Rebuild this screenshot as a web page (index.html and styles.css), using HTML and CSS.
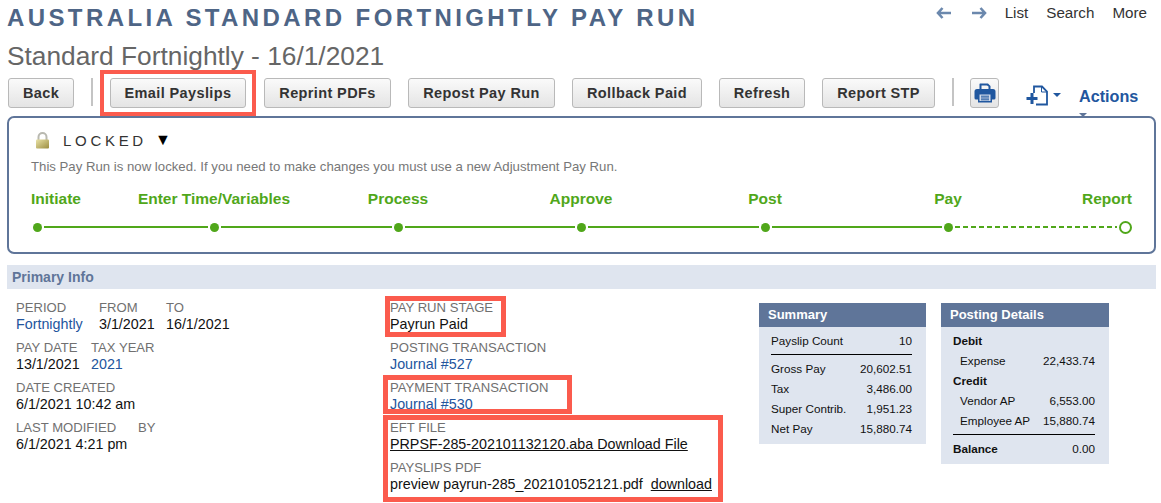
FILE: index.html
```html
<!DOCTYPE html>
<html lang="en">
<head>
<meta charset="utf-8">
<title>Australia Standard Fortnightly Pay Run</title>
<link rel="stylesheet" href="styles.css">
</head>
<body>
<header class="top">
  <h1 class="title">AUSTRALIA STANDARD FORTNIGHTLY PAY RUN</h1>
  <nav class="nav">
    <svg class="arrow arrow-back" width="16" height="12" viewBox="0 0 16 12"><path d="M6.500 1 2 6l4.500 5M2.500 6H15" fill="none" stroke="#6b88ad" stroke-width="2.600"/></svg>
    <svg class="arrow arrow-next" width="16" height="12" viewBox="0 0 16 12"><path d="M9.500 1 14 6l-4.500 5M13.500 6H1" fill="none" stroke="#6b88ad" stroke-width="2.600"/></svg>
    <a class="nav-link nav-list">List</a>
    <a class="nav-link nav-search">Search</a>
    <a class="nav-link">More</a>
  </nav>
</header>
<h2 class="subtitle">Standard Fortnightly - 16/1/2021</h2>

<div class="toolbar">
  <button class="btn btn-back">Back</button>
  <span class="sep sep-a"></span>
  <button class="btn btn-email">Email Payslips<span class="hl hl-email"></span></button>
  <button class="btn btn-reprint">Reprint PDFs</button>
  <button class="btn btn-repost">Repost Pay Run</button>
  <button class="btn btn-rollback">Rollback Paid</button>
  <button class="btn btn-refresh">Refresh</button>
  <button class="btn btn-stp">Report STP</button>
  <span class="sep sep-b"></span>
  <button class="btn btn-print" aria-label="Print">
    <svg width="22" height="22" viewBox="0 0 22 22"><path d="M6 1.500h8l2.500 2.500v3.500h-2V4.500L13 3.500H7.500v4h-2V2z" fill="#20579f"/><path d="M3 7h16a2.500 2.500 0 0 1 2.500 2.500V16a1.500 1.500 0 0 1-1.500 1.500h-2v3H4v-3H2A1.500 1.500 0 0 1 .5 16V9.500A2.500 2.500 0 0 1 3 7z" fill="#20579f"/><path d="M5.500 12.500h11v6.500h-11z" fill="#cfd9e8"/><path d="M7 14.200h8M7 16h8M7 17.800h8" stroke="#20579f" stroke-width="1"/></svg>
  </button>
  <svg class="new-icon" width="24" height="21" viewBox="0 0 24 21"><path d="M8 8V1.500h8l5 5v13H10" fill="none" stroke="#20579f" stroke-width="1.800"/><path d="M15.500 1.500v5.500h5.500" fill="none" stroke="#20579f" stroke-width="1"/><path d="M6 8v11M.5 13.500h11" fill="none" stroke="#20579f" stroke-width="3"/></svg>
  <span class="caret"></span>
  <a class="actions">Actions<span class="actions-tip"></span></a>
</div>

<section class="status">
  <div class="lock-row">
    <svg class="lock" width="15" height="17" viewBox="0 0 15 17"><defs><linearGradient id="gold" x1="0" y1="0" x2="1" y2="1"><stop offset="0" stop-color="#e9e2a6"/><stop offset="1" stop-color="#9b8c3f"/></linearGradient></defs><path d="M3.500 8V5a4 4 0 0 1 8 0v3" fill="none" stroke="#b9b9b0" stroke-width="2"/><rect x="1" y="7.500" width="13" height="9" rx="1" fill="url(#gold)"/></svg>
    <span class="locked">LOCKED</span>
    <span class="locked-caret">▼</span>
  </div>
  <p class="lock-note">This Pay Run is now locked. If you need to make changes you must use a new Adjustment Pay Run.</p>
  <div class="steps steps-labels">
    <span class="step-label step-first">Initiate</span><i></i>
    <span class="step-label">Enter Time/Variables</span><i></i>
    <span class="step-label">Process</span><i></i>
    <span class="step-label">Approve</span><i></i>
    <span class="step-label">Post</span><i></i>
    <span class="step-label">Pay</span><i></i>
    <span class="step-label step-last">Report</span>
  </div>
  <div class="steps steps-track">
    <span class="dot"></span><span class="line"></span>
    <span class="dot"></span><span class="line"></span>
    <span class="dot"></span><span class="line"></span>
    <span class="dot"></span><span class="line"></span>
    <span class="dot"></span><span class="line"></span>
    <span class="dot"></span><span class="line line-dash"></span>
    <span class="dot-open"></span>
  </div>
</section>

<div class="section-bar">Primary Info</div>

<main class="info">
  <div class="col col-one">
    <div class="field-row row-period">
      <div class="field"><div class="lbl">PERIOD</div><a class="val link">Fortnightly</a></div>
      <div class="field"><div class="lbl">FROM</div><div class="val">3/1/2021</div></div>
      <div class="field"><div class="lbl">TO</div><div class="val">16/1/2021</div></div>
    </div>
    <div class="field-row row-pay">
      <div class="field"><div class="lbl">PAY DATE</div><div class="val">13/1/2021</div></div>
      <div class="field"><div class="lbl">TAX YEAR</div><a class="val link">2021</a></div>
    </div>
    <div class="field-row">
      <div class="field"><div class="lbl">DATE CREATED</div><div class="val">6/1/2021 10:42 am</div></div>
    </div>
    <div class="field-row row-mod">
      <div class="field"><div class="lbl">LAST MODIFIED</div><div class="val">6/1/2021 4:21 pm</div></div>
      <div class="field"><div class="lbl">BY</div></div>
    </div>
  </div>

  <div class="col col-two">
    <div class="field-row"><div class="field"><div class="lbl">PAY RUN STAGE</div><div class="val">Payrun Paid</div></div></div>
    <div class="field-row"><div class="field"><div class="lbl">POSTING TRANSACTION</div><a class="val link">Journal #527</a></div></div>
    <div class="field-row"><div class="field"><div class="lbl">PAYMENT TRANSACTION</div><a class="val link">Journal #530</a></div></div>
    <div class="field-row"><div class="field"><div class="lbl">EFT FILE</div><a class="val under">PRPSF-285-202101132120.aba Download File</a></div></div>
    <div class="field-row"><div class="field"><div class="lbl">PAYSLIPS PDF</div><div class="val">preview payrun-285_202101052121.pdf&nbsp; <a class="under">download</a></div></div></div>
    <span class="hl hl-stage"></span>
    <span class="hl hl-payment"></span>
    <span class="hl hl-eft"></span>
  </div>

  <aside class="panel panel-summary">
    <div class="panel-head">Summary</div>
    <div class="panel-body">
      <div class="pr"><span>Payslip Count</span><span>10</span></div>
      <hr class="rule">
      <div class="pr"><span>Gross Pay</span><span>20,602.51</span></div>
      <div class="pr"><span>Tax</span><span>3,486.00</span></div>
      <div class="pr"><span>Super Contrib.</span><span>1,951.23</span></div>
      <div class="pr"><span>Net Pay</span><span>15,880.74</span></div>
    </div>
  </aside>

  <aside class="panel panel-posting">
    <div class="panel-head">Posting Details</div>
    <div class="panel-body">
      <div class="pr pr-bold"><span>Debit</span></div>
      <div class="pr pr-sub"><span>Expense</span><span>22,433.74</span></div>
      <div class="pr pr-bold"><span>Credit</span></div>
      <div class="pr pr-sub"><span>Vendor AP</span><span>6,553.00</span></div>
      <div class="pr pr-sub"><span>Employee AP</span><span>15,880.74</span></div>
      <hr class="rule">
      <div class="pr pr-bold"><span>Balance</span><span class="num-plain">0.00</span></div>
    </div>
  </aside>
</main>
</body>
</html>
```

FILE: styles.css
```css
* { box-sizing: border-box; }
html, body { margin: 0; padding: 0; background: #fff; }
body {
  width: 1161px;
  height: 503px;
  overflow: hidden;
  font-family: "Liberation Sans", Arial, sans-serif;
  font-size: 14px;
  color: #111;
}

/* header */
.top { display: flex; justify-content: space-between; height: 36px; padding: 0 14px 0 7px; }
.title {
  margin: 5px 0 0;
  font-size: 24px;
  line-height: 25px;
  font-weight: bold;
  letter-spacing: 3.400px;
  color: #4e6586;
  white-space: nowrap;
}
.nav { display: flex; align-items: center; height: 24px; margin-top: 1px; color: #333; }
.arrow-back { margin-right: 19px; }
.arrow-next { margin-right: 18px; }
.nav-link { font-size: 15.200px; line-height: 24px; color: #333; }
.nav-list { margin-right: 18px; }
.nav-search { margin-right: 18px; }

.subtitle {
  margin: 5px 0 0 7px;
  font-size: 26.300px;
  line-height: 30px;
  font-weight: normal;
  color: #666;
  white-space: nowrap;
}

/* toolbar */
.toolbar { display: flex; align-items: flex-start; height: 30px; margin-top: 7px; padding-left: 8px; position: relative; }
.btn {
  position: relative;
  height: 30px;
  margin: 0 17px 0 0;
  padding: 0;
  border: 1px solid #b9b9b9;
  border-radius: 3px;
  background: linear-gradient(#fafafa, #e4e4e4);
  font-family: inherit;
  font-size: 14.500px;
  font-weight: bold;
  letter-spacing: .38px;
  color: #333;
}
.btn-back { width: 66px; margin-right: 17px; }
.btn-email { width: 136px; margin-right: 18px; }
.btn-reprint { width: 127px; }
.btn-repost { width: 147px; }
.btn-rollback { width: 130px; }
.btn-refresh { width: 86px; }
.btn-stp { width: 113px; margin-right: 17px; }
.btn-print { width: 29px; margin: 0 27px 0 0; display: flex; align-items: center; justify-content: center; }
.sep { width: 2px; height: 28px; background: #c4c4c4; flex: none; }
.sep-a { margin-right: 17px; }
.sep-b { margin-right: 16px; }
.new-icon { margin-top: 7px; }
.caret {
  width: 0; height: 0; margin: 15px 18px 0 3px;
  border-left: 4px solid transparent;
  border-right: 4px solid transparent;
  border-top: 4px solid #20579f;
}
.actions { position: relative; margin-top: 8px; font-size: 16.200px; line-height: 20px; font-weight: bold; color: #22569e; }
.actions-tip {
  position: absolute; left: 0; top: 27px; width: 0; height: 0;
  border-left: 4px solid transparent;
  border-right: 4px solid transparent;
  border-top: 4px solid #5f7599;
}

/* annotations */
.hl { position: absolute; border: 5px solid #fb5b4d; pointer-events: none; }
.hl-email { left: -11px; top: -9px; width: 156px; height: 46px; border-width: 4.500px; }
.hl-stage { left: -5px; top: -4px; width: 121px; height: 41px; }
.hl-payment { left: -7px; top: 75px; width: 189px; height: 39px; }
.hl-eft { left: -7px; top: 115px; width: 340px; height: 87px; }

/* status box */
.status {
  width: 1149px;
  height: 138px;
  margin: 8px 0 0 7px;
  padding: 12px 22px 0 22px;
  border: 2px solid #5f7599;
  border-radius: 7px;
}
.lock-row { display: flex; align-items: center; height: 20px; padding-left: 4px; }
.lock { margin-right: 13px; }
.locked { font-size: 15px; letter-spacing: 3.700px; color: #333; }
.locked-caret { margin-left: 8px; font-size: 16px; color: #000; }
.lock-note { margin: 9px 0 0; font-size: 13.200px; line-height: 16px; color: #777; white-space: nowrap; }
.steps {
  display: grid;
  grid-template-columns: 11px 165.500px 11px 173px 11px 172px 11px 173px 11px 172px 11px 165.500px 13px;
  align-items: center;
  width: 1100px;
}
.steps-labels { height: 20px; margin: 14px 0 0 1px; }
.steps-track { height: 14px; margin: 11px 0 0 1px; }
.step-label {
  justify-self: center;
  font-size: 15.500px;
  font-weight: bold;
  color: #50a71a;
  white-space: nowrap;
}
.step-first { justify-self: start; margin-left: -1px; }
.step-last { justify-self: end; }
.dot { justify-self: center; width: 9px; height: 9px; border-radius: 50%; background: #50a71a; }
.dot-open { width: 13px; height: 13px; border-radius: 50%; border: 2px solid #50a71a; background: #fff; }
.line { height: 2px; margin: 0 1px; background: #50a71a; }
.line-dash {
  margin-right: 2px;
  background: repeating-linear-gradient(90deg, #50a71a 0 5px, transparent 5px 8px);
}

/* primary info */
.section-bar {
  width: 1149px;
  height: 24px;
  margin: 11px 0 0 7px;
  padding-left: 5px;
  background: #dfe5ef;
  font-size: 14px;
  line-height: 24px;
  font-weight: bold;
  color: #5f7599;
}
.info { display: flex; align-items: flex-start; padding: 11px 0 0 16px; }
.col { position: relative; }
.col-one { width: 374px; }
.col-two { width: 369px; }
.field-row { height: 40px; }
.row-period { display: grid; grid-template-columns: 83px 67px auto; }
.row-pay { display: grid; grid-template-columns: 75px auto; }
.row-mod { display: grid; grid-template-columns: 122px auto; }
.lbl { font-size: 13.100px; line-height: 16px; color: #707070; white-space: nowrap; }
.val { display: block; font-size: 14.300px; line-height: 16px; color: #111; white-space: nowrap; }
.link { color: #23559d; }
.under { color: #111; text-decoration: underline; }

/* side panels */
.panel { margin-top: 3px; background: #dfe5ef; font-size: 11.700px; color: #111; }
.panel-summary { width: 167px; height: 141px; margin-right: 15px; }
.panel-posting { width: 168px; height: 161px; }
.panel-head {
  height: 24px;
  padding-left: 9px;
  background: #5f7599;
  font-size: 13px;
  line-height: 24px;
  font-weight: bold;
  color: #fff;
}
.panel-body { padding: 4px 14px 0 12px; }
.pr { display: flex; justify-content: space-between; height: 20px; line-height: 20px; white-space: nowrap; }
.pr-bold { font-weight: bold; }
.pr-sub { padding-left: 7px; }
.num-plain { font-weight: normal; }
.rule { height: 1px; margin: 3px 0 4px; border: 0; background: #000; }
```
